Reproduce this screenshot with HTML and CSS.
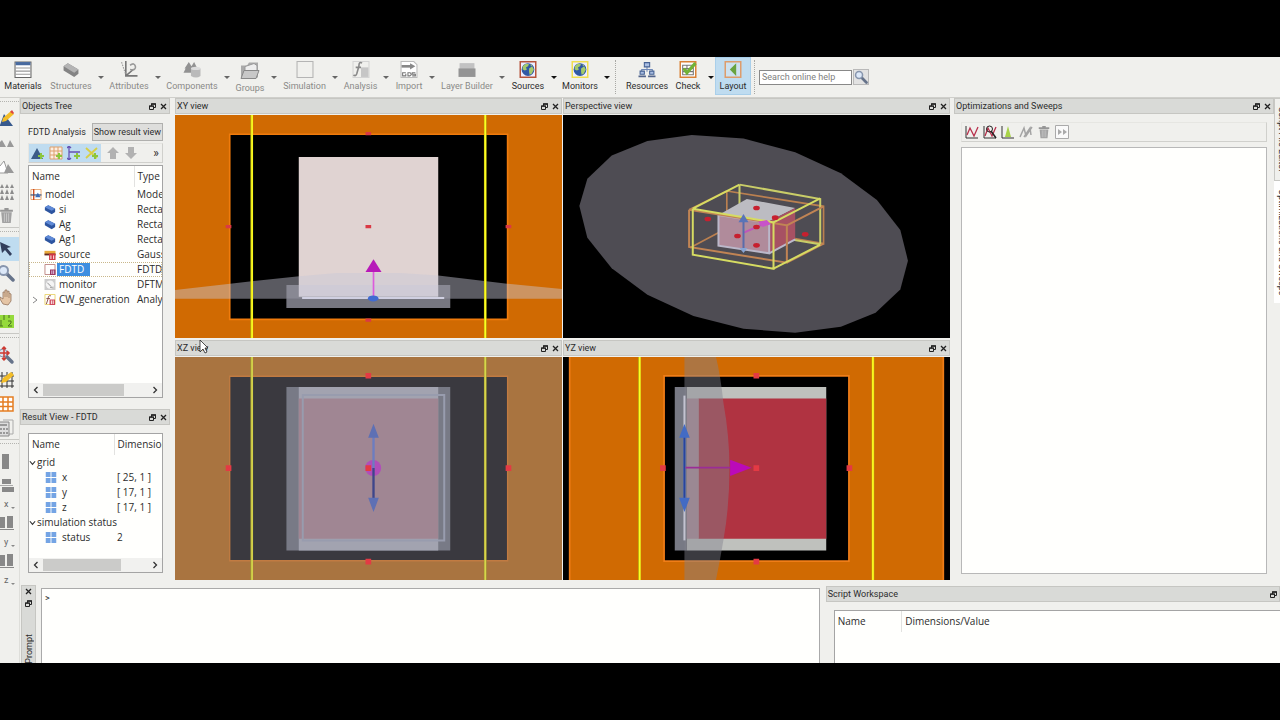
FILE: index.html
```html
<!DOCTYPE html>
<html lang="en">
<head>
<meta charset="utf-8">
<title>FDTD Layout Editor</title>
<link rel="stylesheet" href="styles.css">
</head>
<body>
<svg class="defs" aria-hidden="true">
  <symbol id="restore" viewBox="0 0 7 7"><path d="M2.5 3V1h4v3.5H5M.5 3h4v3.5h-4z" fill="none" stroke="#222"/><path d="M2 1h5M0 3.2h5" stroke="#222" stroke-width="1.3"/></symbol>
  <symbol id="close" viewBox="0 0 7 7"><path d="M1 1l5 5M6 1L1 6" stroke="#222" stroke-width="1.3"/></symbol>
  <symbol id="block" viewBox="0 0 14 12"><path d="M1 3.5L5 1l8 4v4l-4 2.500L1 7z" fill="#2d559f"/><path d="M1 3.500L5 1l8 4-4 2.500z" fill="#5f8ad6"/></symbol>
  <symbol id="gridcells" viewBox="0 0 12 12"><path d="M0 0h5.500v5.500H0zM6.500 0H12v5.500H6.500zM0 6.500h5.500V12H0zM6.500 6.500H12V12H6.500z" fill="#74a4e4"/></symbol>
  <symbol id="globe" viewBox="0 0 16 16"><circle cx="8" cy="8" r="6" fill="#3159a5"/><path d="M3 5l3-2.500 3 .5-1 2-2 1 1 2-2 1-2-1zM9 7l3-2 1.500 3-2 4-2 1-.5-3zM10 3l2 1-1 1z" fill="#a4ca6b"/></symbol>
  <symbol id="trash" viewBox="0 0 14 16"><path d="M2 5h10l-1 10H3z" fill="#a2a2a2"/><path d="M1 3.500h12M5 2h4" stroke="#969696" stroke-width="2"/><path d="M5 6v8M7 6v8M9 6v8" stroke="#ccc" stroke-width=".8"/></symbol>
  <symbol id="lens" viewBox="0 0 18 18"><path d="M10 10l6 6" stroke="#66738a" stroke-width="3.500" stroke-linecap="round"/><circle cx="6.500" cy="6.500" r="4.500" fill="#dce8f8" stroke="#8795ad" stroke-width="2"/></symbol>
</svg>
<div class="app">
  <header class="toolbar">
    <button class="tool"><svg viewBox="0 0 16 16"><path d="M.5 1h15v14.500H.5z" fill="#fff" stroke="#666"/><path d="M1 1h14v3H1z" fill="#486a9f"/><path d="M1 6.500h14M1 9.500h14M1 12.500h14" stroke="#999"/></svg>Materials</button>
    <button class="tool off"><svg viewBox="0 0 16 16"><path d="M1 5l4-3 10 6v4l-4 3L1 9z" fill="#848484"/><path d="M1 5l4-3 10 6-4 3z" fill="#b4b4b4"/></svg>Structures</button>
    <button class="drop off" aria-label="Structures menu"></button>
    <button class="tool off"><svg viewBox="0 0 16 16"><path d="M5 0v14h11M5 14l7-6" stroke="#777" fill="none" stroke-width="1.500"/><path d="M9 4q4-3 5 1t-5 3" stroke="#999" fill="none" stroke-width="1.500"/><path d="M1 1l4 12" stroke="#999" fill="none" stroke-dasharray="1.500 1"/></svg>Attributes</button>
    <button class="drop off" aria-label="Attributes menu"></button>
    <button class="tool off"><svg viewBox="0 0 16 16"><path d="M0 11l2-4H1l4-6 2.500 4L10 1l5 10z" fill="#929292"/><path d="M7 7h9v7q-4 3-9 0z" fill="#bababa"/><ellipse cx="11.500" cy="7" rx="4.500" ry="1.500" fill="#dcdcdc"/></svg>Components</button>
    <button class="drop off" aria-label="Components menu"></button>
    <button class="tool off groups"><svg viewBox="0 0 20 18"><path d="M1 4h6l2-3h9v15H1z" fill="#aaa"/><path d="M5 5l9-3 3 2v6H5z" fill="#eee" stroke="#999"/><path d="M4 9h15l-3 8H1z" fill="#c8c8c8" stroke="#888"/></svg>Groups</button>
    <button class="drop off" aria-label="Groups menu"></button>
    <button class="tool off"><svg viewBox="0 0 16 16"><path d="M.5 .5h15v15H.5z" fill="none" stroke="#b4b4b4"/></svg>Simulation</button>
    <button class="drop off" aria-label="Simulation menu"></button>
    <button class="tool off"><svg viewBox="0 0 16 16"><path d="M.5 .5h15v15H.5z" fill="none" stroke="#d4d4d4"/><path d="M8 6h7v9H8z" fill="#c6c6c6"/><path d="M9 2Q6 0 6 5L4 12Q3 15 1 13M3 6h5" stroke="#888" stroke-width="1.500" fill="none"/></svg>Analysis</button>
    <button class="drop off" aria-label="Analysis menu"></button>
    <button class="tool off"><svg viewBox="0 0 16 16"><path d="M.5 .5h12l3 3v12H.5z" fill="#fff" stroke="#bbb"/><path d="M1 5h10" stroke="#888" stroke-width="2.500"/><path d="M9 2l5 3-5 3z" fill="#888"/><path d="M5 11H2v3h3v-2M7 11v3h2q2-1 0-3zM14 11h-3v1.500h3V14h-3" fill="none" stroke="#777"/></svg>Import</button>
    <button class="drop off" aria-label="Import menu"></button>
    <button class="tool off"><svg viewBox="0 0 16 16"><path d="M1 2h14v6H1z" fill="#c2c2c2"/><path d="M0 7h16v8H0z" fill="#949494"/></svg>Layer Builder</button>
    <button class="drop off" aria-label="Layer Builder menu"></button>
    <button class="tool"><svg viewBox="0 0 16 16"><path d="M.7 .7h14.600v14.600H.7z" fill="#eef" stroke="#b5543c" stroke-width="1.400"/><use href="#globe"/></svg>Sources</button>
    <button class="drop" aria-label="Sources menu"></button>
    <button class="tool"><svg viewBox="0 0 16 16"><path d="M.7 .7h14.600v14.600H.7z" fill="#eef" stroke="#f1df50" stroke-width="1.400"/><use href="#globe"/></svg>Monitors</button>
    <button class="drop" aria-label="Monitors menu"></button>
    <span class="grip"></span>
    <button class="tool"><svg viewBox="0 0 16 16"><path d="M8 5v5M3 11V8h10v3" fill="none" stroke="#7089b8"/><path d="M5.500 1.500h5v4h-5zM1.500 9.500h4v3h-4zM10.500 9.500h4v3h-4z" fill="#a9bee2" stroke="#466294"/><path d="M0 14.500h7M9 14.500h7" stroke="#53658c" stroke-width="1.500"/></svg>Resources</button>
    <button class="tool"><svg viewBox="0 0 16 16"><path d="M.7 .7h14.600v14.600H.7z" fill="#fff" stroke="#d98136" stroke-width="1.400"/><path d="M3 4h10v9H3zM3 7h10M3 10h10M7 4v9" fill="none" stroke="#777"/><path d="M4 7l3 4 8-9" stroke="#72b236" stroke-width="3" fill="none"/></svg>Check</button>
    <button class="drop" aria-label="Check menu"></button>
    <button class="tool active"><svg viewBox="0 0 16 16"><path d="M.7 .7h14.600v14.600H.7z" fill="#cde1ef" stroke="#de9c6b" stroke-width="1.400"/><path d="M11 2v12L5 8z" fill="#69a33e"/></svg>Layout</button>
    <span class="grip"></span>
    <form class="search"><input type="text" placeholder="Search online help" aria-label="Search online help"><button type="button" aria-label="Search"><svg viewBox="0 0 18 18"><use href="#lens"/></svg></button></form>
  </header>

  <div class="body">
    <nav class="side" aria-label="Edit tools">
      <span class="rule first"></span>
      <button aria-label="Edit"><svg viewBox="0 0 20 24"><path d="M0 18L4 7l9 12H0z" fill="#37598d"/><path d="M2 15l1-4 8-7 3 3-8 7z" fill="#f3bd27"/><path d="M10 5l2-2 2 3-1 1z" fill="#d44"/></svg></button>
      <button aria-label="Duplicate"><svg viewBox="0 0 20 24"><path d="M0 16V11l2-2 4 7zM7 16l3-7 4 7z" fill="#999"/></svg></button>
      <button aria-label="Scale"><svg viewBox="0 0 20 24"><path d="M0 11l4-5 4 12H0" fill="#fff" stroke="#999"/><path d="M4 18l4-9 6 9z" fill="#999"/></svg></button>
      <button aria-label="Array"><svg viewBox="0 0 20 24"><path d="M0 9l2-4 2 4zM5 9l2-4 2 4zM10 9l2-4 2 4zM0 15l2-5 2 5zM5 15l2-5 2 5zM10 15l2-5 2 5zM0 21l2-5 2 5zM5 21l2-5 2 5zM10 21l2-5 2 5z" fill="#8c8c8c"/></svg></button>
      <button aria-label="Delete"><svg viewBox="0 0 20 24"><use href="#trash" x="-1" y="4" width="15" height="17"/></svg></button>
      <span class="rule"></span>
      <button class="active" aria-label="Select"><svg viewBox="0 0 20 24"><path d="M0 5l11 5-4 1 5 6-2 2-5-6-3 3z" fill="#333f5c"/></svg></button>
      <button aria-label="Zoom"><svg viewBox="0 0 20 24"><use href="#lens" x="-3" y="3" width="18" height="18"/></svg></button>
      <button aria-label="Pan"><svg viewBox="0 0 20 24"><path d="M3 19L0 14v-2l3 2V7h2V5h2v2l2-1v2l2 1v7l-3 4z" fill="#e5c5a5" stroke="#94755e" stroke-width=".8"/><path d="M5 7v5M7 7v5M9 8v5" stroke="#94755e" stroke-width=".7"/></svg></button>
      <button aria-label="Ruler"><svg viewBox="0 0 20 24"><path d="M0 6h14v13H0z" fill="#95da3c"/><path d="M4 6v5M9 6v3M1 11v6M0 17h3M8 12h3v2l-3 3h4" fill="none" stroke="#4c7422"/></svg></button>
      <span class="rule"></span>
      <button aria-label="Zoom extent"><svg viewBox="0 0 20 24"><path d="M6 13l6 6" stroke="#66738a" stroke-width="3.500" stroke-linecap="round"/><circle cx="3" cy="10" r="4" fill="#dce3ed" stroke="#8795ad"/><path d="M4 4v13M0 10h9M2 6l2-2 2 2M7 8l2 2-2 2M2 15l2 2 2-2" stroke="#cf3931" stroke-width="1.500" fill="none"/></svg></button>
      <button aria-label="Edit grid"><svg viewBox="0 0 20 24"><path d="M2 5v16M7 5v16M12 5v16M0 9h14M0 14h14M0 19h14" stroke="#333"/><path d="M1 16l2-5 8-6 3 3-8 7z" fill="#f3bd27"/></svg></button>
      <button aria-label="Show mesh"><svg viewBox="0 0 20 24"><path d="M0 6h13v14H0M0 11h13M0 15.500h13M3 6v14M8 6v14" fill="#fff" stroke="#e57d22" stroke-width="1.500"/></svg></button>
      <button aria-label="Calculator"><svg viewBox="0 0 20 24"><path d="M3 5h10v14H9" fill="none" stroke="#aaa"/><path d="M0 7h9v14H0" fill="#ddd" stroke="#888"/><path d="M0 9h7v2H0zM0 13h2v2H0zM3 13h2v2H3zM6 13h2v2H6zM0 17h2v2H0zM3 17h2v2H3zM6 17h2v2H6z" fill="#999"/></svg></button>
      <span class="rule"></span>
      <button aria-label="Align center"><svg viewBox="0 0 20 24"><path d="M2 5h7v15H2z" fill="#888"/></svg></button>
      <button aria-label="Align rows"><svg viewBox="0 0 20 24"><path d="M2 6h9v5H2zM2 14h12v5H2z" fill="#888"/><path d="M0 12.500h13" stroke="#aaa"/></svg></button>
      <button class="axis">x<i></i></button>
      <button aria-label="Distribute y"><svg viewBox="0 0 20 24"><path d="M0 6h5v11H0zM7 5h6v12H7z" fill="#888"/><path d="M0 18.500h14" stroke="#888"/></svg></button>
      <button class="axis">y<i></i></button>
      <button aria-label="Distribute z"><svg viewBox="0 0 20 24"><path d="M0 6h5v11H0zM7 5h6v12H7z" fill="#888"/><path d="M0 18.500h14" stroke="#888"/></svg></button>
      <button class="axis">z<i></i></button>
    </nav>

    <div class="work">
      <div class="upper">
        <div class="left">
          <section class="dock objects">
            <h2 class="bar"><span>Objects Tree</span><svg><use href="#restore"/></svg><svg><use href="#close"/></svg></h2>
            <div class="inner">
              <div class="mode"><span>FDTD Analysis</span><button>Show result view</button></div>
              <div class="mini">
                <button class="on" aria-label="Show structures"><svg viewBox="0 0 14 14"><path d="M0 13L6 2l6 11z" fill="#3b5b87"/><path d="M10 7v6M7 10h6" stroke="#8cc63c" stroke-width="2"/></svg></button>
                <button class="on" aria-label="Show mesh"><svg viewBox="0 0 14 14"><path d="M1 1h12v12H1zM1 5h12M1 9h12M5 1v12M9 1v12" fill="#fbeee2" stroke="#dda06d"/><path d="M10 7v6M7 10h6" stroke="#8cc63c" stroke-width="2"/></svg></button>
                <button class="on" aria-label="Show sources"><svg viewBox="0 0 14 14"><path d="M2 0v14M2 6h11M0 2l2-2 2 2M0 12l2 2 2-2" fill="none" stroke="#6552b4" stroke-width="1.300"/><path d="M10 7v6M7 10h6" stroke="#8cc63c" stroke-width="2"/></svg></button>
                <button class="on" aria-label="Show monitors"><svg viewBox="0 0 14 14"><path d="M1 2l11 10M12 2L1 12" stroke="#d8ce44" stroke-width="1.800"/><path d="M10 7v6M7 10h6" stroke="#8cc63c" stroke-width="2"/></svg></button>
                <button class="gap" aria-label="Move up"><svg viewBox="0 0 14 14"><path d="M7 1l6 6h-3v6H4V7H1z" fill="#b2b2b2"/></svg></button>
                <button aria-label="Move down"><svg viewBox="0 0 14 14"><path d="M7 13l6-6h-3V1H4v6H1z" fill="#b2b2b2"/></svg></button>
                <button class="more" aria-label="More">»</button>
              </div>
              <div class="frame">
                <table class="tree">
                  <colgroup><col class="wide"><col></colgroup>
                  <thead><tr><th>Name</th><th>Type</th></tr></thead>
                  <tbody>
                    <tr><td><div class="node root"><svg viewBox="0 0 12 12"><path d="M.5 .5h11v11H.5z" fill="#fff" stroke="#e8a26a"/><path d="M3.500 0v12" stroke="#cf4b23" stroke-width="1.500"/><path d="M0 6.500h12" stroke="#36527e" stroke-width="1.300"/><path d="M5 9l3-5 3 5z" fill="#3c6cb8"/></svg>model</div></td><td>Mode</td></tr>
                    <tr><td><div class="node"><svg viewBox="0 0 14 12"><use href="#block"/></svg>si</div></td><td>Recta</td></tr>
                    <tr><td><div class="node"><svg viewBox="0 0 14 12"><use href="#block"/></svg>Ag</div></td><td>Recta</td></tr>
                    <tr><td><div class="node"><svg viewBox="0 0 14 12"><use href="#block"/></svg>Ag1</div></td><td>Recta</td></tr>
                    <tr><td><div class="node"><svg viewBox="0 0 12 12"><path d="M0 2h12v4H0z" fill="#e8aa3d"/><path d="M0 5h12v2H0z" fill="#602c23"/><path d="M5 5h7v7H5z" fill="#cf3544"/><path d="M7 7v4M10 7v4" stroke="#fff"/></svg>source</div></td><td>Gauss</td></tr>
                    <tr class="picked"><td><div class="node"><svg viewBox="0 0 12 12"><path d="M.5 .5h11v11H.5z" fill="#fff" stroke="#bb827e"/><path d="M6 6h6v6H6z" fill="#97365e"/><path d="M8 7v4M10 7v4" stroke="#e8d3f5"/></svg><mark>FDTD</mark></div></td><td>FDTD</td></tr>
                    <tr><td><div class="node"><svg viewBox="0 0 12 12"><path d="M0 0h12v12H0z" fill="#ccc"/><circle cx="6" cy="6" r="4.500" fill="#f4f4f4"/><path d="M3 4l4 4M6 9h3" stroke="#888"/></svg>monitor</div></td><td>DFTM</td></tr>
                    <tr><td><div class="node parent"><svg class="chev" viewBox="0 0 6 8"><path d="M1 1l4 3-4 3" fill="none" stroke="#888"/></svg><svg viewBox="0 0 12 12"><path d="M.5 .5h11v11H.5z" fill="#fff" stroke="#e9d36a"/><path d="M7 2Q4 1 4 5L2 11M2 5h4" stroke="#864b42" fill="none"/><path d="M5.500 6h6v6h-6z" fill="#cf4658"/><path d="M7.500 7v4M9.500 7v4" stroke="#fff"/></svg>CW_generation</div></td><td>Analy</td></tr>
                  </tbody>
                </table>
                <div class="scroll"><svg viewBox="0 0 6 8"><path d="M4.500 1L1.500 4l3 3" fill="none" stroke="#333" stroke-width="1.300"/></svg><span class="track"><b style="width:77%"></b></span><svg viewBox="0 0 6 8"><path d="M1.500 1l3 3-3 3" fill="none" stroke="#333" stroke-width="1.300"/></svg></div>
              </div>
            </div>
          </section>
          <section class="dock results">
            <h2 class="bar"><span>Result View - FDTD</span><svg><use href="#restore"/></svg><svg><use href="#close"/></svg></h2>
            <div class="inner">
              <div class="frame">
                <table class="tree">
                  <colgroup><col class="mid"><col></colgroup>
                  <thead><tr><th>Name</th><th>Dimension</th></tr></thead>
                  <tbody>
                    <tr><td colspan="2"><div class="group"><svg viewBox="0 0 8 6"><path d="M1 1l3 3.500L7 1" fill="none" stroke="#333" stroke-width="1.300"/></svg>grid</div></td></tr>
                    <tr><td><div class="node leaf"><svg viewBox="0 0 12 12"><use href="#gridcells"/></svg>x</div></td><td>[ 25, 1 ]</td></tr>
                    <tr><td><div class="node leaf"><svg viewBox="0 0 12 12"><use href="#gridcells"/></svg>y</div></td><td>[ 17, 1 ]</td></tr>
                    <tr><td><div class="node leaf"><svg viewBox="0 0 12 12"><use href="#gridcells"/></svg>z</div></td><td>[ 17, 1 ]</td></tr>
                    <tr><td colspan="2"><div class="group"><svg viewBox="0 0 8 6"><path d="M1 1l3 3.500L7 1" fill="none" stroke="#333" stroke-width="1.300"/></svg>simulation status</div></td></tr>
                    <tr><td><div class="node leaf"><svg viewBox="0 0 12 12"><use href="#gridcells"/></svg>status</div></td><td>2</td></tr>
                  </tbody>
                </table>
                <div class="scroll"><svg viewBox="0 0 6 8"><path d="M4.500 1L1.500 4l3 3" fill="none" stroke="#333" stroke-width="1.300"/></svg><span class="track"><b style="width:74%"></b></span><svg viewBox="0 0 6 8"><path d="M1.500 1l3 3-3 3" fill="none" stroke="#333" stroke-width="1.300"/></svg></div>
              </div>
            </div>
          </section>
        </div>

        <main class="views">
          <section class="view">
            <h2 class="bar"><span>XY view</span><svg><use href="#restore"/></svg><svg><use href="#close"/></svg></h2>
            <svg class="scene" viewBox="15 57 1160 669" preserveAspectRatio="xMidYMid slice">
              <path d="M15 57h1160v669H15z" fill="#d06a02"/>
              <path d="M179 115h833v555H179z" fill="#000" stroke="#f07b0c" stroke-width="5"/>
              <path d="M386 183h418v419H386z" fill="#e0d3d2"/>
              <path d="M15 582L180 563 380 541 500 531H690L804 538 1011 563 1175 579V608H15z" fill="#c8c8d8" opacity=".45"/>
              <path d="M349 567h491v69H349z" fill="#c8c8d8" opacity=".42"/>
              <path d="M349 608h491v28H349z" fill="#c8c8d8" opacity=".3"/>
              <path d="M396 606h426" stroke="#d0d0e2" stroke-width="6"/>
              <path d="M245 57v669M945 57v669" stroke="#b3ad13" stroke-width="8"/><path d="M246 57v669M945 57v669" stroke="#ffff20" stroke-width="5"/>
              <path d="M610 600v-75" stroke="#dc5bdc" stroke-width="5"/><path d="M610 490l24 38h-48z" fill="#b719b9"/>
              <ellipse cx="609" cy="607" rx="16" ry="9" fill="#416bd1"/>
              <path d="M586 108h17v10h-17zM586 387h17v10h-17zM586 667h17v10h-17zM167 387h17v10h-17zM1006 387h17v10h-17z" fill="#da3945"/>
            </svg>
          </section>
          <section class="view">
            <h2 class="bar"><span>Perspective view</span><svg><use href="#restore"/></svg><svg><use href="#close"/></svg></h2>
            <svg class="scene" viewBox="9 57 1160 669" preserveAspectRatio="xMidYMid slice">
              <path d="M9 57h1160v669H9z"/>
              <path d="M58 330L82 248 155 179 262 135 395 117 550 128 705 169 842 232 950 312 1020 402 1043 494 1020 580 946 650 842 692 705 710 550 698 400 660 262 596 155 517 82 425z" fill="#4e4c53"/>
              <path d="M500 285L790 331V443L695 426M500 285V397L390 455M500 285L387 341" fill="none" stroke="#bb8050" stroke-width="5"/>
              <path d="M538 266L780 309V445L690 430M538 266V390" fill="none" stroke="#c9cd68" stroke-width="6"/>
              <path d="M475 357L560 309 705 336 627 376z" fill="#bcbcc2"/>
              <path d="M475 357L627 376V472L475 449z" fill="#b08b9b"/>
              <path d="M627 376L705 336V430L627 472z" fill="#a75163"/>
              <path d="M475 357V449L627 472V376M627 472L705 430M475 357L627 380" fill="none" stroke="#bbb8ca" stroke-width="6"/>
              <path d="M387 341V453L680 500V388L387 341M680 388L790 331M680 500L790 443" fill="none" stroke="#c18454" stroke-width="6"/>
              <path d="M398 338L538 266M398 338V476L640 518V379L398 338M640 379L780 307M640 518L780 446" fill="none" stroke="#d6dc62" stroke-width="6"/>
              <path d="M551 410L610 384" stroke="#bf55bb" stroke-width="6"/><path d="M594 377L620 372 632 385 607 393z" fill="#c853c9"/>
              <path d="M550 370v95" stroke="#5a6cab" stroke-width="6"/><path d="M550 354l15 25h-30z" fill="#5874b8"/><path d="M538 456h24l-12 15z" fill="#88a5d4"/>
              <g fill="#c7202f"><ellipse cx="589" cy="336" rx="10" ry="7"/><ellipse cx="645" cy="365" rx="10" ry="7"/><ellipse cx="443" cy="369" rx="10" ry="7"/><ellipse cx="589" cy="393" rx="10" ry="7"/><ellipse cx="532" cy="420" rx="10" ry="7"/><ellipse cx="589" cy="448" rx="10" ry="7"/><ellipse cx="735" cy="415" rx="10" ry="7"/></g>
            </svg>
          </section>
          <section class="view">
            <h2 class="bar"><span>XZ view</span><svg><use href="#restore"/></svg><svg><use href="#close"/></svg></h2>
            <svg class="scene" viewBox="15 52 1160 669" preserveAspectRatio="xMidYMid slice">
              <path d="M15 52h1160v669H15z" fill="#a97440"/>
              <path d="M179 110h833v553H179z" fill="#3a393f" stroke="#c17b42" stroke-width="4"/>
              <path d="M349 142h491v490H349z" fill="#787a86"/>
              <path d="M386 142h418v490H386z" fill="#a2a3b0"/>
              <path d="M386 177h418v420H386z" fill="#a08693"/>
              <path d="M398 166h424v436H398z" fill="none" stroke="#989cae" stroke-width="6"/>
              <path d="M245 52v669M945 52v669" stroke="#a09832" stroke-width="8"/><path d="M246 52v669M945 52v669" stroke="#d8d64c" stroke-width="5"/>
              <circle cx="609" cy="385" r="24" fill="#b04eb9"/>
              <path d="M610 290v95" stroke="#6c7dc0" stroke-width="7"/><path d="M610 385v92" stroke="#3e468b" stroke-width="7"/>
              <path d="M610 252l16 42h-32zM610 517l16-43h-32z" fill="#5e70b4"/>
              <path d="M586 100h17v17h-17zM586 377h17v17h-17zM586 657h17v17h-17zM167 377h17v17h-17zM1006 377h17v17h-17z" fill="#e33a44"/>
            </svg>
          </section>
          <section class="view">
            <h2 class="bar"><span>YZ view</span><svg><use href="#restore"/></svg><svg><use href="#close"/></svg></h2>
            <svg class="scene" viewBox="9 52 1160 669" preserveAspectRatio="xMidYMid slice">
              <path d="M9 52h1160v669H9z"/>
              <path d="M29 40h1120v700H29z" fill="#d06a02" stroke="#ef7d18" stroke-width="5"/>
              <path d="M312 109h554v555H312z" fill="#000" stroke="#ef7d18" stroke-width="5"/>
              <path d="M344 142h36v490h-36z" fill="#777984"/>
              <path d="M380 142h418v490H380z" fill="#bfc1bd"/>
              <path d="M415 177h383v420H415z" fill="#b03341"/>
              <path d="M380 177h35v420h-35z" fill="#b08c98"/>
              <path d="M373 50H467Q480 100 490 190 508 290 508 385 508 500 490 600 480 660 467 723H373z" fill="#83838f" opacity=".45"/>
              <path d="M373 168v434" stroke="#c3c3d0" stroke-width="6"/>
              <path d="M238 52v669M938 52v669" stroke="#b9ad13" stroke-width="8"/><path d="M239 52v669M938 52v669" stroke="#ffff20" stroke-width="5"/>
              <path d="M373 290v190" stroke="#27459d" stroke-width="7"/><path d="M373 253l16 41h-32zM373 517l16-43h-32z" fill="#436bc4"/>
              <path d="M376 384h134" stroke="#9a2d96" stroke-width="5"/><path d="M510 360l64 24-64 25z" fill="#bb0ab9"/>
              <path d="M580 100h17v17h-17zM580 377h17v17h-17zM580 657h17v17h-17zM300 377h17v17h-17zM859 377h17v17h-17z" fill="#e33a44"/>
            </svg>
          </section>
          <svg class="cursor" viewBox="0 0 10 16"><path d="M1 1v12l3-3 2 4 2-1-2-4h3z" fill="#fff" stroke="#222" stroke-width=".8"/></svg>
        </main>

        <section class="dock sweeps">
          <h2 class="bar"><span>Optimizations and Sweeps</span><svg><use href="#restore"/></svg><svg><use href="#close"/></svg></h2>
          <div class="inner">
            <div class="mini">
              <button aria-label="New sweep"><svg viewBox="0 0 14 14"><path d="M1 1v12h12" fill="none" stroke="#333"/><path d="M2 10l3-7 4 8 4-9" fill="none" stroke="#b8304c" stroke-width="1.300"/></svg></button>
              <button aria-label="New optimization"><svg viewBox="0 0 14 14"><path d="M1 1v12h12" fill="none" stroke="#333"/><path d="M2 11l3-8 4 8 4-9" fill="none" stroke="#b8304c" stroke-width="1.300"/><circle cx="6.500" cy="4" r="3" fill="none" stroke="#222"/><path d="M8 6l5 7" stroke="#222" stroke-width="1.500"/></svg></button>
              <button aria-label="New yield analysis"><svg viewBox="0 0 14 14"><path d="M4 12l3-11 3 11z" fill="#a8d347"/><path d="M1 1v12h12" fill="none" stroke="#333"/></svg></button>
              <button aria-label="Edit sweep"><svg viewBox="0 0 14 14"><path d="M1 12l4-9 2 8 6-9M5 12l6-9 1 7" fill="none" stroke="#a4a4a4" stroke-width="1.500"/></svg></button>
              <button aria-label="Delete sweep"><svg viewBox="0 0 14 16"><use href="#trash"/></svg></button>
              <button aria-label="Run sweep"><svg viewBox="0 0 14 14"><path d="M.5 .5h13v13H.5z" fill="#fafafa" stroke="#aaa"/><path d="M3 4l4 3-4 3zM8 4l4 3-4 3z" fill="#aaa"/></svg></button>
            </div>
            <div class="frame"></div>
          </div>
        </section>

        <div class="tabs">
          <button>Script File Editor</button>
          <button class="active">Optimizations and Sweeps</button>
        </div>
      </div>

      <div class="lower">
        <section class="prompt">
          <h2 class="vbar"><svg><use href="#close"/></svg><svg><use href="#restore"/></svg><span>Script Prompt</span></h2>
          <textarea aria-label="Script prompt">&gt;</textarea>
        </section>
        <section class="dock workspace">
          <h2 class="bar"><span>Script Workspace</span><svg><use href="#restore"/></svg></h2>
          <div class="inner"><div class="frame"><table class="tree">
            <colgroup><col class="name"><col></colgroup>
            <thead><tr><th>Name</th><th>Dimensions/Value</th></tr></thead>
          </table></div></div>
        </section>
      </div>
    </div>
  </div>
</div>
</body>
</html>
```
FILE: styles.css
```css
* { box-sizing: border-box; }
body {
  margin: 0;
  padding: 57px 0;
  height: 100vh;
  background: #000;
  color: #2c2c2c;
  font: 9px/12px Roboto, "Liberation Sans", sans-serif;
  overflow: hidden;
}
button, input, textarea { font: inherit; color: inherit; margin: 0; padding: 0; border: 0; background: none; }
svg { display: block; flex: none; }
.defs { position: absolute; width: 0; height: 0; }
.app { height: 100%; display: flex; flex-direction: column; background: #f0f0ed; overflow: hidden; }

/* main toolbar */
.toolbar {
  flex: none;
  height: 41px;
  display: grid;
  grid-template-columns: 46px 50px 10px 46px 11px 58px 11px 36px 12px 49px 12px 39px 12px 34px 12px 58px 12px 40px 11px 42px 11px 12px 46px 36px 9px 36px 8px 1fr;
  align-items: start;
  border-bottom: 1px solid #cfcfcb;
}
.tool {
  height: 38px;
  display: flex;
  flex-direction: column;
  align-items: center;
  justify-content: center;
  gap: 2px;
  white-space: nowrap;
}
.tool svg { width: 18px; height: 17px; }
.tool.groups svg { width: 20px; height: 19px; }
.tool.groups { padding-top: 3px; }
.off { color: #8a8a88; }
.tool.active { background: #bfdcf0; border: 1px solid #a9cfea; }
.drop { height: 38px; display: flex; align-items: center; justify-content: center; }
.drop::after { content: ""; border: 3px solid transparent; border-top-color: #111; border-bottom: 0; margin-top: 2px; }
.drop.off::after { border-top-color: #666; }
.grip { height: 34px; margin: 3px 3px 0; border-left: 1px dotted #a8a8a4; }
.search { display: flex; align-items: center; gap: 1px; height: 40px; }
.search input { width: 93px; height: 15px; padding: 0 2px; background: #fff; border: 1px solid #888; }
.search input::placeholder { color: #808080; }
.search button { width: 16px; height: 16px; border: 1px solid #b9b9b9; background: #e2e2e2; }
.search button svg { width: 14px; height: 14px; }

.body { flex: 1; min-height: 0; display: flex; }

/* edit tools */
.side { flex: none; width: 20px; display: flex; flex-direction: column; border-right: 1px solid #dededa; overflow: hidden; }
.side button { flex: none; height: 24px; }
.side button.active { background: #bfdcf0; }
.side svg { width: 20px; height: 24px; }
.rule { flex: none; height: 10px; border-top: 1px solid #c8c8c4; }
.rule::after { content: ""; display: block; margin-top: 3px; border-top: 1px dotted #b4b4b0; }
.rule.first { height: 9px; border-top: 0; }
.side .axis { height: 14px; display: flex; align-items: center; gap: 3px; padding-left: 4px; color: #666; }
.axis i { border: 2px solid transparent; border-top-color: #888; border-bottom: 0; margin-top: 8px; }

.work { flex: 1; min-width: 0; display: flex; flex-direction: column; }
.upper { flex: 1; min-height: 0; display: flex; }

/* dock title bars */
.bar {
  flex: none;
  display: flex;
  align-items: center;
  gap: 4px;
  height: 16px;
  margin: 0;
  padding: 0 2px 0 1px;
  font-size: 9px;
  font-weight: 400;
  background: #d9dad7;
  border: 1px solid #c6c6c2;
}
.bar span { flex: 1; white-space: nowrap; }
.bar svg { width: 7px; height: 7px; }
.dock { display: flex; flex-direction: column; min-height: 0; }
.inner { flex: 1; min-height: 0; display: flex; flex-direction: column; padding: 8px 7px 9px 8px; }
.frame { flex: 1; min-height: 0; display: flex; flex-direction: column; background: #fffffd; border: 1px solid #a4a4a4; overflow: hidden; }

.left { flex: none; width: 150px; display: flex; flex-direction: column; padding-bottom: 1px; }
.objects { flex: 1; }
.objects .inner { padding-bottom: 11px; }
.results { flex: none; height: 173px; }
.mode { display: flex; justify-content: space-between; align-items: center; height: 18px; margin-top: 1px; white-space: nowrap; }
.mode button { height: 18px; padding: 0 1px; border: 1px solid #b0b0ae; background: #dededc; }
.mini { flex: none; display: flex; align-items: center; height: 20px; margin: 2px 0; border: 1px solid #d0d0cc; border-top-color: #e6e6e2; border-left-color: #e6e6e2; }
.mini button { width: 18px; height: 18px; display: flex; align-items: center; justify-content: center; }
.mini svg { width: 14px; height: 14px; }
.mini .on { background: #bfdcf0; }
.mini .gap { margin-left: 3px; }
.mini .more { margin-left: auto; width: 12px; font-size: 12px; }

/* trees */
.tree { width: 100%; table-layout: fixed; border-collapse: collapse; font: 10px/15px "Open Sans", "Noto Sans", sans-serif; }
.tree th, .tree td { padding: 0; font-weight: 400; text-align: left; white-space: nowrap; overflow: hidden; height: 15px; }
.tree th { height: 21px; padding-left: 3px; }
.tree th + th { border-left: 1px solid #e2e2e0; }
.tree td + td { padding-left: 3px; }
.wide { width: 105px; }
.mid { width: 85px; }
.name { width: 67px; }
.node { display: flex; align-items: center; gap: 3px; padding-left: 15px; height: 15px; }
.node svg { width: 12px; height: 11px; }
.node.root { padding-left: 1px; }
.node.parent { padding-left: 3px; }
.node .chev { width: 6px; height: 8px; margin-right: 3px; }
.node.leaf { padding-left: 16px; gap: 5px; }
.node mark { background: #3d8ee0; color: #fff; margin-left: -2px; padding: 0 6px 0 2px; height: 13px; line-height: 13px; }
.picked { outline: 1px dotted #c9b78a; outline-offset: -1px; }
.group { display: flex; align-items: center; gap: 1px; height: 15px; }
.group svg { width: 7px; height: 6px; }
.scroll { flex: none; display: flex; align-items: center; height: 14px; margin-top: auto; background: #f1f1ef; }
.scroll svg { width: 14px; height: 8px; }
.track { flex: 1; height: 12px; }
.track b { display: block; height: 100%; background: #cbcbc9; }

/* viewports */
.views {
  position: relative;
  flex: 1;
  min-width: 0;
  display: grid;
  grid-template-columns: 1fr 1fr;
  grid-template-rows: 1fr 1fr;
  gap: 2px 1px;
  margin: 0 4px 0 5px;
  padding-bottom: 3px;
}
.view { display: flex; flex-direction: column; gap: 1px; min-height: 0; min-width: 0; }
.scene { flex: 1; min-height: 0; width: 100%; }
.cursor { position: absolute; left: 24px; top: 241px; width: 10px; height: 16px; }

.sweeps { flex: none; width: 320px; }
.sweeps .inner { padding-left: 7px; }
.sweeps .mini { margin: 0 0 5px; padding-left: 1px; }
.sweeps .frame { border-color: #b8b8b8; }

.tabs { flex: none; width: 6px; overflow: hidden; display: flex; flex-direction: column; }
.tabs button { flex: none; width: 16px; height: 83px; writing-mode: vertical-rl; text-align: center; line-height: 12px; white-space: nowrap; border: 1px solid #c8c8c4; }
.tabs .active { height: 122px; background: #fff; border-color: #fff; }

/* bottom docks */
.lower { flex: none; height: 80px; display: flex; gap: 6px; overflow: hidden; }
.prompt { flex: 800; display: flex; gap: 5px; padding-left: 1px; padding-top: 2px; }
.vbar {
  flex: none;
  width: 15px;
  height: 105px;
  margin: 0;
  padding-top: 2px;
  display: flex;
  flex-direction: column;
  align-items: center;
  gap: 5px;
  font-size: 9px;
  font-weight: 400;
  background: #d9dad7;
  border: 1px solid #c6c6c2;
}
.vbar svg { width: 7px; height: 7px; }
.vbar span { writing-mode: vertical-rl; transform: rotate(180deg); margin-top: auto; white-space: nowrap; }
.prompt textarea { flex: 1; margin-top: 3px; padding: 3px; resize: none; background: #fffffd; border: 1px solid #aaa; border-bottom: 0; outline: 0; }
.workspace { flex: 455; padding-top: 3px; }
.workspace .inner { padding: 8px 0 0 8px; }
.workspace .frame { border-right: 0; border-bottom: 0; }
```
